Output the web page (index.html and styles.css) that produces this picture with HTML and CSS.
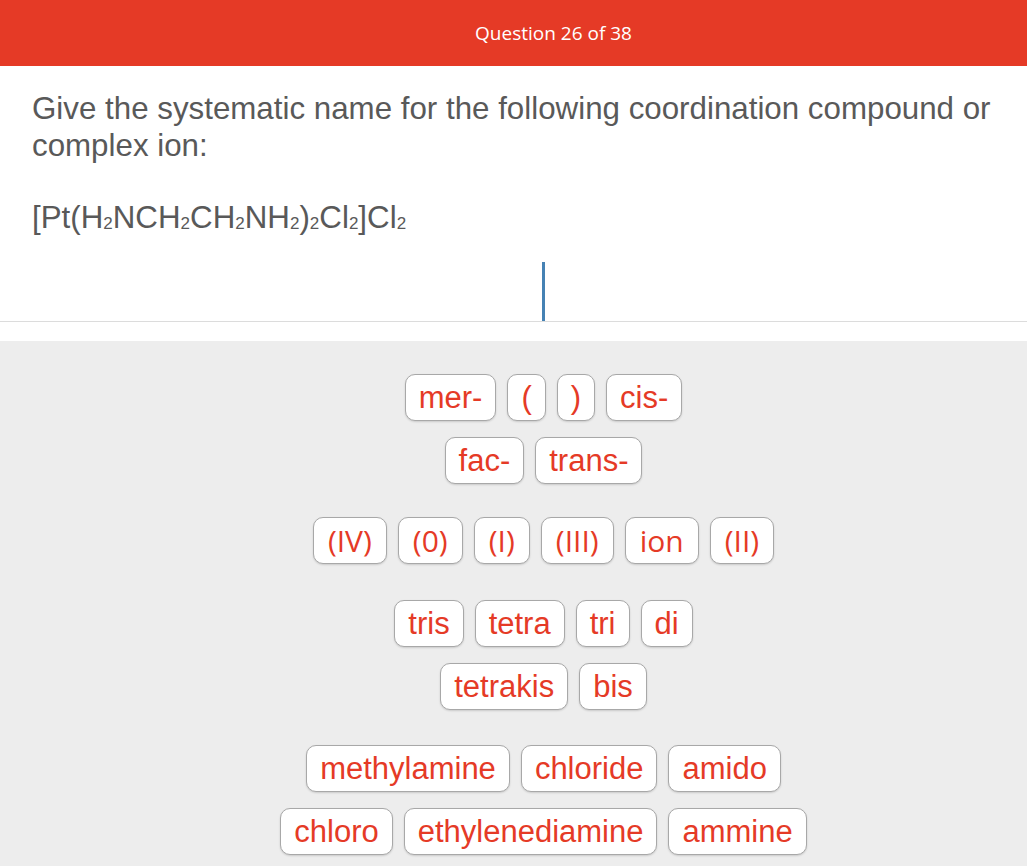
FILE: index.html
```html
<!DOCTYPE html>
<html lang="en">
<head>
  <meta charset="UTF-8" />
  <title>Question 26 of 38</title>
  <link rel="stylesheet" href="styles.css">
</head>
<body>
  <div class="header">Question 26 of 38</div>

  <div class="top">
    <div class="question">
      <p>Give the systematic name for the following coordination compound or complex ion:</p>
      <p class="formula">[Pt(H<sub>2</sub>NCH<sub>2</sub>CH<sub>2</sub>NH<sub>2</sub>)<sub>2</sub>Cl<sub>2</sub>]Cl<sub>2</sub></p>
    </div>

    <div class="answer">
      <span class="caret"></span>
    </div>
  </div>

  <div class="bank">
    <!-- isomer prefixes -->
    <div class="group">
      <div class="row">
        <span class="chip">mer-</span>
        <span class="chip">(</span>
        <span class="chip">)</span>
        <span class="chip">cis-</span>
      </div>
      <div class="row">
        <span class="chip">fac-</span>
        <span class="chip">trans-</span>
      </div>
    </div>

    <!-- oxidation states -->
    <div class="group roman">
      <div class="row">
        <span class="chip">(IV)</span>
        <span class="chip">(0)</span>
        <span class="chip">(I)</span>
        <span class="chip">(III)</span>
        <span class="chip">ion</span>
        <span class="chip">(II)</span>
      </div>
    </div>

    <!-- numeric prefixes -->
    <div class="group">
      <div class="row">
        <span class="chip">tris</span>
        <span class="chip">tetra</span>
        <span class="chip">tri</span>
        <span class="chip">di</span>
      </div>
      <div class="row">
        <span class="chip">tetrakis</span>
        <span class="chip">bis</span>
      </div>
    </div>

    <!-- ligands -->
    <div class="group last">
      <div class="row">
        <span class="chip">methylamine</span>
        <span class="chip">chloride</span>
        <span class="chip">amido</span>
      </div>
      <div class="row">
        <span class="chip">chloro</span>
        <span class="chip">ethylenediamine</span>
        <span class="chip">ammine</span>
      </div>
    </div>
  </div>
</body>
</html>
```

FILE: styles.css
```css
body {
  margin: 0;
  background: #ededed;
  font-family: "Liberation Sans", Arial, sans-serif;
  color: #595959;
  overflow: hidden;
}

.header {
  height: 66px;
  background: #e53a26;
  color: #fff;
  font-family: "Open Sans", sans-serif;
  font-size: 19px;
  display: flex;
  align-items: center;
  justify-content: center;
  padding-left: 80px;
}

.top {
  background: #fff;
  padding-bottom: 19px;
}

.question {
  padding: 24px 32px 0;
  font-size: 31.3px;
  line-height: 37px;
}

.question p {
  margin: 0 0 35px;
}

.question .formula {
  margin: 0;
}

.formula sub {
  font-size: 17px;
  vertical-align: baseline;
  position: relative;
  top: 1px;
}

/* answer line */
.answer {
  height: 80px;
  display: flex;
  justify-content: center;
  align-items: flex-end;
  padding-left: 60px;
  border-bottom: 1px solid #dcdcdc;
}

.caret {
  width: 3px;
  height: 59px;
  background: #4682b4;
}

/* word bank */
.bank {
  padding: 33px 0 20px 60px;
  display: flex;
  flex-direction: column;
  gap: 33px;
}

.group {
  display: flex;
  flex-direction: column;
  gap: 16px;
}

.group.roman {
  margin-bottom: 3px;
}

.group.last {
  margin-top: 2px;
}

.row {
  display: flex;
  justify-content: center;
  gap: 11px;
}

.chip {
  height: 45px;
  line-height: 45px;
  padding: 0 13px;
  background: #fff;
  border: 1px solid #a8a8a8;
  border-radius: 10px;
  box-shadow: 0 1px 2px rgba(0, 0, 0, 0.15);
  color: #e53a26;
  font-size: 31px;
  white-space: nowrap;
}

.roman .chip {
  font-family: "Open Sans", sans-serif;
  font-size: 30px;
  padding: 0 14px;
}
```
